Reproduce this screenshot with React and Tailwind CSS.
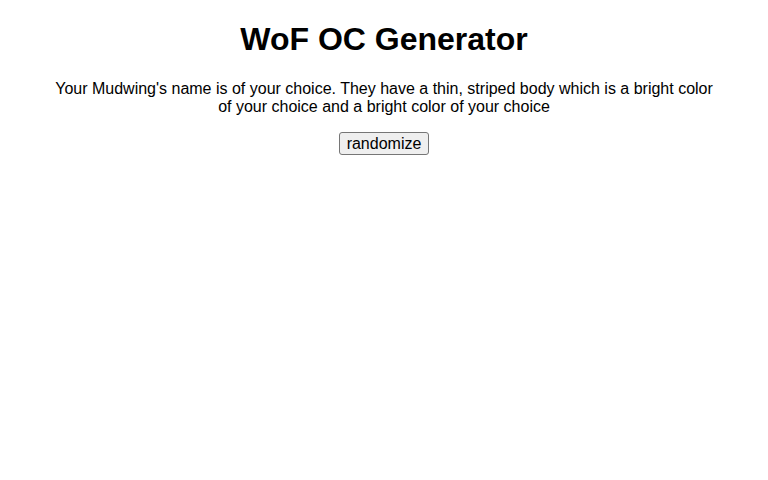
export default function App() {
  return (
    <div className="min-h-screen bg-white px-2 pt-[21.44px] text-center font-['Liberation_Sans',Arial,sans-serif] text-black">
      <h1 className="mb-[21.44px] text-[32px] font-bold leading-[normal]">WoF OC Generator</h1>
      <p className="mx-auto mb-4 max-w-[668px] text-base leading-[normal]">
        Your Mudwing's name is of your choice. They have a thin, striped body which is a bright color of your choice and a bright color of your choice
      </p>
      <button className="rounded-[3px] border border-[#767676] bg-[#efefef] px-[7px] py-[1.5px] text-base leading-[normal] text-black">
        randomize
      </button>
    </div>
  );
}
